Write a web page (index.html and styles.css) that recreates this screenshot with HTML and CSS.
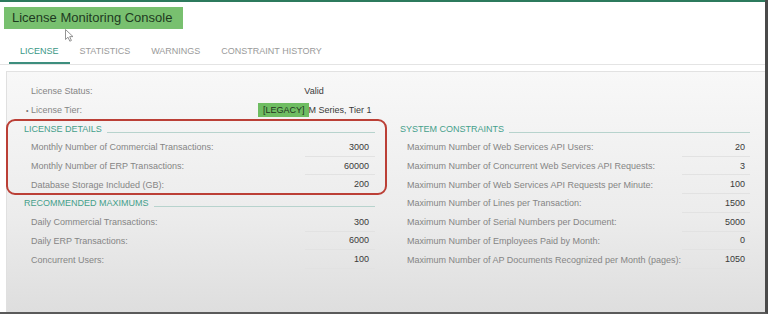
FILE: index.html
```html
<!DOCTYPE html>
<html lang="en">
<head>
    <meta charset="UTF-8">
    <meta name="viewport" content="width=device-width, initial-scale=1.0">
    <title>License Monitoring Console</title>
    <link rel="stylesheet" href="styles.css">
</head>
<body>

    <div class="screen">
        <div class="topline"></div>

        <div class="title-row">
            <span class="title">License Monitoring Console</span>
        </div>

        <!-- mouse pointer captured in the recording -->
        <svg class="cursor" width="9" height="13" viewBox="0 0 9 13">
            <path d="M0.5 0.5 L0.5 10.5 L3 8.2 L4.8 12.2 L6.4 11.5 L4.7 7.6 L8 7.6 Z" fill="#fff" stroke="#888" stroke-width="0.9" stroke-linejoin="round"/>
        </svg>

        <nav class="tabs">
            <a class="tab active">License</a>
            <a class="tab">Statistics</a>
            <a class="tab">Warnings</a>
            <a class="tab">Constraint History</a>
        </nav>

        <div class="panel">
            <div class="col">
                <div class="row info">
                    <span class="label">License Status:</span>
                    <span class="info-value">Valid</span>
                </div>
                <div class="row info">
                    <span class="label"><span class="bullet">&bull;</span>License Tier:</span>
                    <span class="info-value"><span class="mark">[LEGACY]</span>M Series, Tier 1</span>
                </div>

                <div class="section-head">License Details</div>
                <div class="row"><span class="label">Monthly Number of Commercial Transactions:</span><span class="value">3000</span></div>
                <div class="row"><span class="label">Monthly Number of ERP Transactions:</span><span class="value">60000</span></div>
                <div class="row"><span class="label">Database Storage Included (GB):</span><span class="value">200</span></div>

                <div class="section-head">Recommended Maximums</div>
                <div class="row"><span class="label">Daily Commercial Transactions:</span><span class="value">300</span></div>
                <div class="row"><span class="label">Daily ERP Transactions:</span><span class="value">6000</span></div>
                <div class="row"><span class="label">Concurrent Users:</span><span class="value">100</span></div>
            </div>

            <div class="col col-right">
                <div class="section-head">System Constraints</div>
                <div class="row"><span class="label">Maximum Number of Web Services API Users:</span><span class="value">20</span></div>
                <div class="row"><span class="label">Maximum Number of Concurrent Web Services API Requests:</span><span class="value">3</span></div>
                <div class="row"><span class="label">Maximum Number of Web Services API Requests per Minute:</span><span class="value">100</span></div>
                <div class="row"><span class="label">Maximum Number of Lines per Transaction:</span><span class="value">1500</span></div>
                <div class="row"><span class="label">Maximum Number of Serial Numbers per Document:</span><span class="value">5000</span></div>
                <div class="row"><span class="label">Maximum Number of Employees Paid by Month:</span><span class="value">0</span></div>
                <div class="row"><span class="label">Maximum Number of AP Documents Recognized per Month (pages):</span><span class="value">1050</span></div>
            </div>
        </div>

        <!-- red annotation drawn around the license details -->
        <div class="callout"></div>
    </div>

</body>
</html>
```

FILE: styles.css
```css
body {
    margin: 0;
    background-color: #fff;
    font-family: "Liberation Sans", Arial, sans-serif;
}

.screen {
    position: relative;
    width: 768px;
    height: 314px;
    box-sizing: border-box;
    border-right: 3px solid #4a4a4a;
    border-bottom: 2px solid #5a5a5a;
    display: flex;
    flex-direction: column;
    overflow: hidden;
}

.topline {
    height: 2px;
    background-color: #2c7a5d;
}

.title-row {
    padding: 5px 0 0 4px;
}

.title {
    display: inline-block;
    height: 22px;
    line-height: 22px;
    padding: 0 11px 0 8px;
    background-color: #78c06f;
    color: #1e3a1f;
    font-size: 13px;
}

.cursor {
    position: absolute;
    left: 65px;
    top: 29px;
}

.tabs {
    display: flex;
    margin-top: 9px;
    border-bottom: 1px solid #e4e4e4;
}

.tab {
    padding: 8px 11px 5px 10px;
    line-height: 11px;
    font-size: 9px;
    text-transform: uppercase;
    color: #9a9a9a;
    border-bottom: 2px solid transparent;
}

.tab:first-child {
    margin-left: 9px;
    padding-left: 11px;
}

.tab.active {
    color: #3b9886;
    border-bottom-color: #3d8e7e;
}

.panel {
    flex: 1;
    margin: 6px 0 0 6px;
    border-top: 1px solid #e2e2e2;
    border-left: 1px solid #e0e0e0;
    background: linear-gradient(#f8f8f8, #ececec 60%, #dedede);
    display: grid;
    grid-template-columns: 351px 350px;
    column-gap: 25px;
    align-content: start;
    padding: 10px 0 0 17px;
}

.col-right {
    padding-top: 37.4px; /* two empty rows */
}

.row {
    display: flex;
    align-items: center;
    height: 18.7px;
    font-size: 9px;
}

.label {
    flex: 1;
    padding-left: 7px;
    color: #858585;
    white-space: nowrap;
}

.bullet {
    display: inline-block;
    width: 5px;
    margin-left: -5px;
    font-size: 7px;
    color: #777;
}

.value {
    width: 70px;
    height: 100%;
    box-sizing: border-box;
    padding-right: 6px;
    display: flex;
    align-items: center;
    justify-content: flex-end;
    color: #3a3a3a;
    border-bottom: 1px solid #e2e2e2;
}

.col-right .value {
    width: 68px;
    padding-right: 5px;
}

.info-value {
    width: 112px;
    margin-right: 5px;
    text-align: center;
    color: #3a3a3a;
    white-space: nowrap;
}

.mark {
    display: inline-block;
    line-height: 14px;
    padding: 0 4px 0 5px;
    background-color: #6fbd62;
    color: #22331f;
}

.section-head {
    display: flex;
    align-items: center;
    height: 18.7px;
    font-size: 9px;
    text-transform: uppercase;
    color: #45a08b;
    white-space: nowrap;
}

.section-head::after {
    content: "";
    flex: 1;
    height: 0;
    margin: 7px 0 0 5px;
    border-top: 1px solid #b7d3cd;
}

.callout {
    position: absolute;
    left: 6px;
    top: 119px;
    width: 381px;
    height: 76px;
    box-sizing: border-box;
    border: 2px solid #bb3f36;
    border-radius: 9px;
}
```
